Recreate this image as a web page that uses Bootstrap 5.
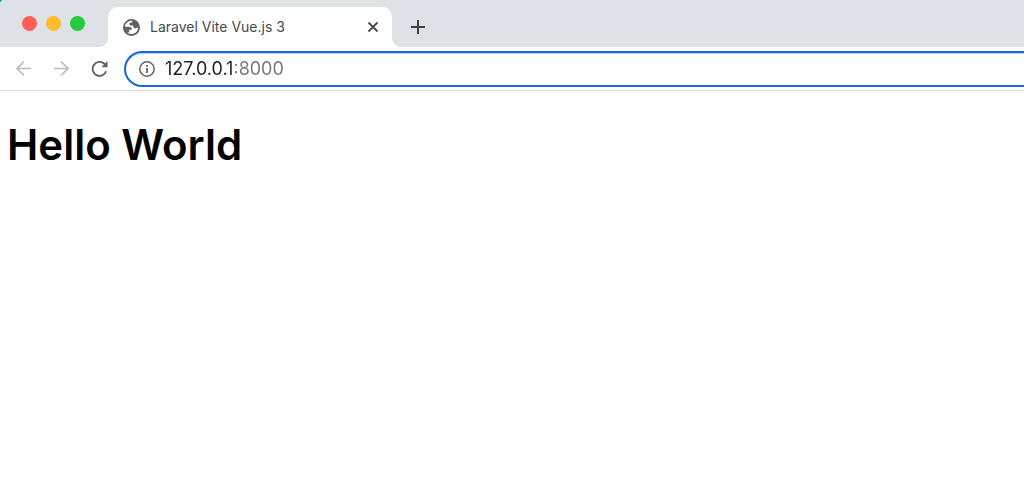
<!DOCTYPE html>
<html lang="en">
<head>
<meta charset="utf-8">
<meta name="viewport" content="width=device-width, initial-scale=1">
<title>Laravel Vite Vue.js 3</title>
<link href="https://cdn.jsdelivr.net/npm/bootstrap@5.3.0/dist/css/bootstrap.min.css" rel="stylesheet">
<style>
  body { font-family: Inter, "Liberation Sans", sans-serif; background: #fff; color: #000; }
  svg { display: block; flex: none; }
  .plain { border: 0; background: none; padding: 0; }
  .tabstrip { position: relative; height: 47px; background: #dee1e6; padding-left: 22px; }
  .tabstrip::before { content: ""; position: absolute; top: 0; left: 0; width: 2px; height: 2px; background: #1aa3c0; border-radius: 0 0 2px 0; }
  .window-dots { gap: 9px; margin: 16px 23px 0 0; }
  .dot { width: 15px; height: 15px; border-radius: 50%; }
  .dot-close { background: #ff5f57; }
  .dot-min { background: #febc2e; }
  .dot-zoom { background: #28c840; }
  .page-tab { position: relative; flex: 0 1 284px; height: 40px; padding: 0 12px 0 15px; gap: 10px; background: #fff; border-radius: 10px 10px 0 0; font-size: 14px; line-height: 20px; color: #45494d; }
  .page-tab::before, .page-tab::after { content: ""; position: absolute; bottom: 0; width: 9px; height: 9px; }
  .page-tab::before { right: 100%; background: radial-gradient(circle at 0 0, #dee1e6 9px, #fff 9px); }
  .page-tab::after { left: 100%; background: radial-gradient(circle at 100% 0, #dee1e6 9px, #fff 9px); }
  .new-tab { height: 40px; margin-left: 18px; }
  .toolbar { height: 44px; padding-left: 15px; border-bottom: 1px solid #dadce0; }
  .nav-icons { gap: 20px; margin-right: 15px; }
  .address { height: 36px; border: 2px solid #1a68d8; border-right: 0; border-radius: 18px 0 0 18px; padding-left: 13px; gap: 10px; box-shadow: inset 0 1px #b5cff5; }
  .address input { font-size: 18px; line-height: 24px; outline: 0; color: #202124; -webkit-text-fill-color: transparent; background: linear-gradient(90deg, #202124 69px, #74787c 69px); -webkit-background-clip: text; background-clip: text; }
  .page-body { padding: 28px 7px; }
  .page-body h1 { font-size: 42px; line-height: 52px; font-weight: 600; }
</style>
</head>
<body>
<header>
  <div class="tabstrip d-flex align-items-end">
    <div class="window-dots d-flex align-self-start">
      <button class="plain dot dot-close" aria-label="Close window"></button>
      <button class="plain dot dot-min" aria-label="Minimize window"></button>
      <button class="plain dot dot-zoom" aria-label="Zoom window"></button>
    </div>
    <div class="page-tab d-flex align-items-center">
      <svg width="17" height="17" viewBox="0 0 17 17" aria-hidden="true"><circle cx="8.500" cy="8.500" r="8.500" fill="#5f6368"/><path d="M10 2C6 1.200 2.200 4 1.900 7.700H6C8 7.700 8.800 8.700 8.800 10V10.800H6.200V12.500C6.200 13.200 5.600 13.500 4.200 13.500C6.500 15.500 10.500 15.500 13 13.200C14.300 12 15 10.500 15.100 8.800H13.500C12.500 10 11 9.500 10.500 8C10.300 7 9.500 6.600 8.500 6.600C7 6.600 6.300 6 6.300 5.200C6.300 4.300 7 3.800 8 3.800H8.700C8.700 3 9.200 2.400 10 2z" fill="#fff"/></svg>
      <span class="flex-grow-1 text-nowrap">Laravel Vite Vue.js 3</span>
      <button class="plain" aria-label="Close tab"><svg width="14" height="14" viewBox="0 0 14 14" fill="none" stroke="#45494d" stroke-width="1.800"><path d="M2.500 2.500l9 9M11.500 2.500l-9 9"/></svg></button>
    </div>
    <button class="plain new-tab" aria-label="New tab"><svg width="16" height="16" viewBox="0 0 16 16" fill="none" stroke="#3c4043" stroke-width="2"><path d="M8 1v14M1 8h14"/></svg></button>
  </div>
  <div class="toolbar d-flex align-items-center">
    <div class="nav-icons d-flex">
      <button class="plain" aria-label="Back"><svg width="18" height="18" viewBox="0 0 18 18" fill="none" stroke="#babcbe" stroke-width="1.700"><path d="M16 8.500H2M9 1.500l-7 7 7 7"/></svg></button>
      <button class="plain" aria-label="Forward"><svg width="18" height="18" viewBox="0 0 18 18" fill="none" stroke="#babcbe" stroke-width="1.700"><path d="M1 8.500h14M8 1.500l7 7-7 7"/></svg></button>
      <button class="plain" aria-label="Reload"><svg width="18" height="18" viewBox="0 0 18 18"><path d="M15.200 11.200A7 7 0 1 1 13.400 3.800L15 5.200" fill="none" stroke="#5f6368" stroke-width="1.900"/><path d="M16.500 1v6.200h-6.200z" fill="#5f6368"/></svg></button>
    </div>
    <div class="address d-flex align-items-center flex-grow-1">
      <svg width="16" height="16" viewBox="0 0 16 16" aria-hidden="true"><circle cx="8" cy="8" r="7.200" fill="none" stroke="#5f6368" stroke-width="1.500"/><path d="M7.100 7h1.800v5H7.100zM7.100 4h1.800v1.800H7.100z" fill="#5f6368"/></svg>
      <input class="plain flex-grow-1" type="text" aria-label="Address" value="127.0.0.1:8000" spellcheck="false">
    </div>
  </div>
</header>
<main class="page-body">
  <h1 class="m-0">Hello World</h1>
</main>
<script src="https://cdn.jsdelivr.net/npm/bootstrap@5.3.0/dist/js/bootstrap.bundle.min.js"></script>
</body>
</html>
